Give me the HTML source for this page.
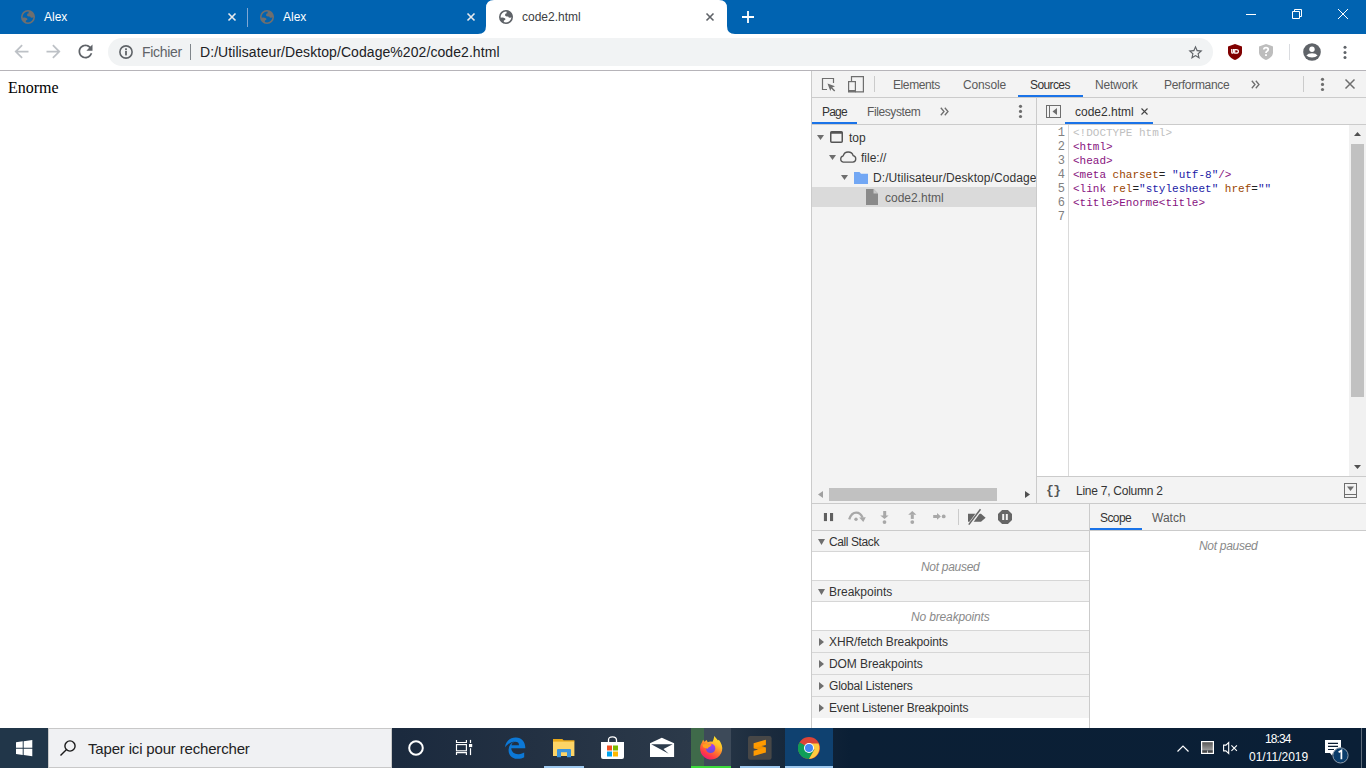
<!DOCTYPE html>
<html><head><meta charset="utf-8">
<style>
*{margin:0;padding:0;box-sizing:border-box}
html,body{width:1366px;height:768px;overflow:hidden;background:#fff;font-family:"Liberation Sans",sans-serif;position:relative}
.a{position:absolute}
.t{position:absolute;white-space:nowrap;line-height:16px;font-size:12px}
svg{position:absolute;overflow:visible}
</style></head><body>

<!-- TITLE BAR -->
<div class="a" style="left:0;top:0;width:1366px;height:34px;background:#0063b1"></div>
<!-- tab 1 -->
<svg style="left:21px;top:10px" width="14" height="14" viewBox="0 0 14 14"><circle cx="7" cy="7" r="6.2" stroke="#6f6f6f" stroke-width="1.6" fill="none"/><path d="M7.6 0.5V3.3Q6 3.6 6 5Q6 6.4 7.8 6.4H9.2Q9.6 8.2 11.3 7.8L13.5 6.8V0.5Z M0.5 7.8L3.6 7.4Q5.8 7.4 6.6 9Q6.2 10.3 4.9 10.5L4.6 13.5H0.5Z" fill="#6f6f6f" clip-path="circle(6.5px at 7px 7px)"/></svg>
<div class="t" style="left:44px;top:9px;color:#fff">Alex</div>
<svg style="left:228px;top:13px" width="8" height="8"><path d="M0.5 0.5L7.5 7.5M7.5 0.5L0.5 7.5" stroke="#e8eaed" stroke-width="1.6"/></svg>
<div class="a" style="left:247px;top:8px;width:1px;height:19px;background:#7fa7d4"></div>
<!-- tab 2 -->
<svg style="left:260px;top:10px" width="14" height="14" viewBox="0 0 14 14"><circle cx="7" cy="7" r="6.2" stroke="#6f6f6f" stroke-width="1.6" fill="none"/><path d="M7.6 0.5V3.3Q6 3.6 6 5Q6 6.4 7.8 6.4H9.2Q9.6 8.2 11.3 7.8L13.5 6.8V0.5Z M0.5 7.8L3.6 7.4Q5.8 7.4 6.6 9Q6.2 10.3 4.9 10.5L4.6 13.5H0.5Z" fill="#6f6f6f" clip-path="circle(6.5px at 7px 7px)"/></svg>
<div class="t" style="left:283px;top:9px;color:#fff">Alex</div>
<svg style="left:467px;top:13px" width="8" height="8"><path d="M0.5 0.5L7.5 7.5M7.5 0.5L0.5 7.5" stroke="#e8eaed" stroke-width="1.6"/></svg>
<!-- active tab -->
<svg style="left:478px;top:0px" width="257" height="34" viewBox="0 0 257 34"><path d="M0 34 Q8 34 8 26 L8 8 Q8 0 16 0 L241 0 Q249 0 249 8 L249 26 Q249 34 257 34 Z" fill="#fff"/></svg>
<svg style="left:499px;top:10px" width="14" height="14" viewBox="0 0 14 14"><circle cx="7" cy="7" r="6.2" stroke="#5f6368" stroke-width="1.6" fill="none"/><path d="M7.6 0.5V3.3Q6 3.6 6 5Q6 6.4 7.8 6.4H9.2Q9.6 8.2 11.3 7.8L13.5 6.8V0.5Z M0.5 7.8L3.6 7.4Q5.8 7.4 6.6 9Q6.2 10.3 4.9 10.5L4.6 13.5H0.5Z" fill="#5f6368" clip-path="circle(6.5px at 7px 7px)"/></svg>
<div class="t" style="left:522px;top:9px;color:#3c4043">code2.html</div>
<svg style="left:706px;top:13px" width="8" height="8"><path d="M0.5 0.5L7.5 7.5M7.5 0.5L0.5 7.5" stroke="#5f6368" stroke-width="1.6"/></svg>
<!-- new tab -->
<svg style="left:742px;top:11px" width="12" height="12"><path d="M6 0V12M0 6H12" stroke="#fff" stroke-width="1.8"/></svg>
<!-- window controls -->
<div class="a" style="left:1246px;top:14px;width:10px;height:1px;background:#fff"></div>
<svg style="left:1292px;top:9px" width="10" height="10"><path d="M0.5 2.5H7.5V9.5H0.5Z M2.5 2.5V0.5H9.5V7.5H7.5" stroke="#fff" stroke-width="1" fill="none"/></svg>
<svg style="left:1338px;top:9px" width="10" height="10"><path d="M0 0L10 10M10 0L0 10" stroke="#fff" stroke-width="1"/></svg>

<!-- TOOLBAR -->
<div class="a" style="left:0;top:70px;width:1366px;height:1px;background:#b6b4b9"></div>
<svg style="left:10.7px;top:40.8px" width="21" height="21" viewBox="0 0 24 24"><path d="M20 11H7.83l5.59-5.59L12 4l-8 8 8 8 1.41-1.41L7.83 13H20v-2z" fill="#bdc1c6"/></svg>
<svg style="left:42.7px;top:40.8px" width="21" height="21" viewBox="0 0 24 24"><path d="M12 4l-1.41 1.41L16.17 11H4v2h12.17l-5.58 5.59L12 20l8-8z" fill="#bdc1c6"/></svg>
<svg style="left:75px;top:40.8px" width="21" height="21" viewBox="0 0 24 24"><path d="M17.65 6.35C16.2 4.9 14.21 4 12 4c-4.42 0-7.99 3.58-7.99 8s3.57 8 7.99 8c3.73 0 6.84-2.55 7.73-6h-2.08c-.82 2.33-3.04 4-5.650 4-3.31 0-6-2.690-6-6s2.69-6 6-6c1.66 0 3.14.69 4.22 1.78L13 11h7V4l-2.35 2.35z" fill="#5f6368"/></svg>
<div class="a" style="left:108px;top:38px;width:1105px;height:28px;border-radius:14px;background:#f1f3f4"></div>
<svg style="left:119px;top:45px" width="14" height="14" viewBox="0 0 14 14"><circle cx="7" cy="7" r="6.1" stroke="#5f6368" stroke-width="1.6" fill="none"/><rect x="6.1" y="5.8" width="1.8" height="4.6" fill="#5f6368"/><rect x="6.1" y="3.3" width="1.8" height="1.7" fill="#5f6368"/></svg>
<div class="t" style="left:142px;top:43px;font-size:14px;line-height:18px;color:#5f6368;letter-spacing:-0.3px">Fichier</div>
<div class="a" style="left:190px;top:44px;width:1px;height:16px;background:#80868b"></div>
<div class="t" style="left:200px;top:43px;font-size:14px;line-height:18px;color:#202124;letter-spacing:0.07px">D:/Utilisateur/Desktop/Codage%202/code2.html</div>
<svg style="left:1186.5px;top:43.5px" width="17" height="17" viewBox="0 0 24 24"><path d="M22 9.24l-7.19-.62L12 2 9.19 8.63 2 9.24l5.46 4.73L5.82 21 12 17.27 18.18 21l-1.63-7.03L22 9.24zM12 15.4l-3.76 2.27 1-4.28-3.32-2.88 4.38-.38L12 6.1l1.71 4.04 4.38.38-3.32 2.88 1 4.28L12 15.4z" fill="#5f6368"/></svg>
<svg style="left:1228px;top:44px" width="14" height="16" viewBox="0 0 14 16"><path d="M7 0L14 2.4V8.5C14 12 10.5 14.6 7 16C3.5 14.6 0 12 0 8.5V2.4Z" fill="#800000"/><path d="M3.7 5.1V8.3Q3.7 9.2 4.55 9.2Q5.4 9.2 5.4 8.3V5.1M6.7 5.7V9.2H8Q10.4 9.2 10.4 7.45Q10.4 5.7 8 5.7Z" stroke="#fff" stroke-width="1.2" fill="none"/></svg>
<svg style="left:1259px;top:44px" width="14" height="16" viewBox="0 0 14 16"><path d="M7 0L14 2.4V8.5C14 12 10.5 14.6 7 16C3.5 14.6 0 12 0 8.5V2.4Z" fill="#bdbdbd"/><path d="M4.8 5.6Q4.8 3.6 7 3.6Q9.2 3.6 9.2 5.5Q9.2 6.6 8 7.2Q7 7.7 7 9" stroke="#fff" stroke-width="1.8" fill="none"/><rect x="6.1" y="10.2" width="1.8" height="1.8" fill="#fff"/></svg>
<div class="a" style="left:1289px;top:44px;width:1px;height:16px;background:#dadce0"></div>
<svg style="left:1303px;top:43px" width="18" height="18" viewBox="0 0 18 18"><circle cx="9" cy="9" r="8.8" fill="#5f6368"/><circle cx="9" cy="6.3" r="2.7" fill="#fff"/><path d="M3.4 12.6Q5 10.3 9 10.3Q13 10.3 14.6 12.6Q12.6 14.6 9 14.6Q5.4 14.6 3.4 12.6Z" fill="#fff"/></svg>
<svg style="left:1343px;top:45px" width="4" height="14" viewBox="0 0 4 14"><circle cx="2" cy="2.3" r="1.5" fill="#5f6368"/><circle cx="2" cy="7.4" r="1.5" fill="#5f6368"/><circle cx="2" cy="12.5" r="1.5" fill="#5f6368"/></svg>

<!-- PAGE -->
<div class="t" style="left:8px;top:78px;font-family:'Liberation Serif',serif;font-size:16px;line-height:20px;color:#000">Enorme</div>


<!-- DEVTOOLS -->
<div class="a" style="left:811px;top:71px;width:555px;height:657px;background:#f3f3f3"></div>
<div class="a" style="left:811px;top:71px;width:1px;height:657px;background:#cbcbcb"></div>
<div class="a" style="left:812px;top:97px;width:554px;height:1px;background:#cbcbcb"></div>
<!-- inspect icon -->
<svg style="left:822px;top:78px" width="14" height="14" viewBox="0 0 14 14"><path d="M5 11.5H0.5V0.5H11.5V5" stroke="#6e6e6e" stroke-width="1.2" fill="none"/><path d="M5.5 5.5L13 8.3L10.2 9.4L13.2 12.4L12.2 13.4L9.2 10.4L8.3 13Z" fill="#6e6e6e"/></svg>
<!-- device icon -->
<svg style="left:848px;top:76px" width="16" height="17" viewBox="0 0 16 17"><path d="M3.5 5.5V0.6H15.4V15.9H7.5" stroke="#6e6e6e" stroke-width="1.2" fill="none"/><rect x="0.6" y="5.6" width="6.8" height="10.3" stroke="#6e6e6e" stroke-width="1.2" fill="none"/><rect x="0.6" y="14" width="6.8" height="1.9" fill="#6e6e6e"/></svg>
<div class="a" style="left:874px;top:76px;width:1px;height:16px;background:#cbcbcb"></div>
<div class="t" style="left:893px;top:77px;color:#5a5a5a;letter-spacing:-0.4px">Elements</div>
<div class="t" style="left:963px;top:77px;color:#5a5a5a;letter-spacing:-0.15px">Console</div>
<div class="t" style="left:1030px;top:77px;color:#333;letter-spacing:-0.6px">Sources</div>
<div class="t" style="left:1095px;top:77px;color:#5a5a5a;letter-spacing:-0.2px">Network</div>
<div class="t" style="left:1164px;top:77px;color:#5a5a5a;letter-spacing:-0.3px">Performance</div>
<div class="a" style="left:1018px;top:95px;width:65px;height:2px;background:#1a73e8"></div>
<svg style="left:1251px;top:80px" width="9" height="9" viewBox="0 0 9 9"><path d="M0.8 0.8L4 4.5L0.8 8.2M4.8 0.8L8 4.5L4.8 8.2" stroke="#6e6e6e" stroke-width="1.3" fill="none"/></svg>
<div class="a" style="left:1303px;top:76px;width:1px;height:16px;background:#cbcbcb"></div>
<svg style="left:1320px;top:77px" width="5" height="15" viewBox="0 0 5 15"><circle cx="2.5" cy="2.3" r="1.6" fill="#6e6e6e"/><circle cx="2.5" cy="7.4" r="1.6" fill="#6e6e6e"/><circle cx="2.5" cy="12.5" r="1.6" fill="#6e6e6e"/></svg>
<svg style="left:1345px;top:79px" width="10" height="10" viewBox="0 0 10 10"><path d="M0.5 0.5L9.5 9.5M9.5 0.5L0.5 9.5" stroke="#6e6e6e" stroke-width="1.5"/></svg>

<!-- second row -->
<div class="a" style="left:812px;top:124px;width:554px;height:1px;background:#cbcbcb"></div>
<div class="a" style="left:1036px;top:98px;width:1px;height:405px;background:#cbcbcb"></div>
<div class="t" style="left:822px;top:104px;color:#333;letter-spacing:-0.8px">Page</div>
<div class="t" style="left:867px;top:104px;color:#5a5a5a;letter-spacing:-0.4px">Filesystem</div>
<div class="a" style="left:812px;top:122px;width:45px;height:2px;background:#1a73e8"></div>
<svg style="left:939.5px;top:106.5px" width="9" height="9" viewBox="0 0 9 9"><path d="M0.8 0.8L4 4.5L0.8 8.2M4.8 0.8L8 4.5L4.8 8.2" stroke="#6e6e6e" stroke-width="1.3" fill="none"/></svg>
<svg style="left:1018px;top:104px" width="5" height="15" viewBox="0 0 5 15"><circle cx="2.5" cy="2.3" r="1.6" fill="#6e6e6e"/><circle cx="2.5" cy="7.4" r="1.6" fill="#6e6e6e"/><circle cx="2.5" cy="12.5" r="1.6" fill="#6e6e6e"/></svg>
<svg style="left:1046px;top:105px" width="15" height="13" viewBox="0 0 15 13"><rect x="0.5" y="0.5" width="14" height="12" stroke="#6e6e6e" stroke-width="1" fill="none"/><path d="M3.5 0.5V12.5" stroke="#6e6e6e" stroke-width="1"/><path d="M11 3L6.5 6.5L11 10Z" fill="#6e6e6e"/></svg>
<div class="t" style="left:1075px;top:104px;color:#333">code2.html</div>
<svg style="left:1141px;top:107.5px" width="7" height="7" viewBox="0 0 7 7"><path d="M0.5 0.5L6.5 6.5M6.5 0.5L0.5 6.5" stroke="#444" stroke-width="1.1"/></svg>
<div class="a" style="left:1065px;top:122px;width:88px;height:2px;background:#1a73e8"></div>

<!-- navigator tree -->
<div class="a" style="left:812px;top:187px;width:224px;height:20px;background:#dadada"></div>
<svg style="left:817px;top:135px" width="7" height="5"><path d="M0 0H7L3.5 5Z" fill="#6e6e6e"/></svg>
<svg style="left:830px;top:131px" width="13" height="12" viewBox="0 0 13 12"><rect x="0.75" y="0.75" width="11.5" height="10.5" rx="1" stroke="#555" stroke-width="1.5" fill="none"/><rect x="0.75" y="0.75" width="11.5" height="2" fill="#555"/></svg>
<div class="t" style="left:849px;top:130px;color:#333">top</div>
<svg style="left:829px;top:155px" width="7" height="5"><path d="M0 0H7L3.5 5Z" fill="#6e6e6e"/></svg>
<svg style="left:839px;top:151px" width="18" height="12" viewBox="0 0 18 12"><path d="M4.2 11.2H13.8A3.3 3.3 0 0 0 14.2 4.7A5.2 5.2 0 0 0 4.2 4.8A3.3 3.3 0 0 0 4.2 11.2Z" stroke="#555" stroke-width="1.3" fill="none"/></svg>
<div class="t" style="left:861px;top:150px;color:#333">file://</div>
<svg style="left:841px;top:175px" width="7" height="5"><path d="M0 0H7L3.5 5Z" fill="#6e6e6e"/></svg>
<svg style="left:854px;top:172px" width="14" height="12" viewBox="0 0 14 12"><path d="M0 0H5.5L7 1.8H14V12H0Z" fill="#72a7f4"/></svg>
<div class="a" style="left:873px;top:165px;width:163px;height:22px;overflow:hidden"><div class="t" style="left:0;top:5px;color:#333;letter-spacing:0.07px">D:/Utilisateur/Desktop/Codage%202</div></div>
<svg style="left:866px;top:189px" width="12" height="16" viewBox="0 0 12 16"><path d="M0 0H7.5L12 4.5V16H0Z" fill="#8a8a8a"/><path d="M7.5 0V4.5H12" fill="#c8c8c8"/></svg>
<div class="t" style="left:885px;top:190px;color:#5a5a5a">code2.html</div>

<!-- editor -->
<div class="a" style="left:1037px;top:125px;width:329px;height:351px;background:#fff"></div>
<div class="a" style="left:1068px;top:125px;width:1px;height:351px;background:#dadada"></div>
<div class="a" style="left:1035px;top:126px;width:30px;font-family:'Liberation Mono',monospace;font-size:12px;line-height:14px;color:#808080;text-align:right;white-space:pre">1
2
3
4
5
6
7</div>
<div class="a" style="left:1073px;top:126px;font-family:'Liberation Mono',monospace;font-size:11px;line-height:14px;color:#222;white-space:pre"><span style="color:#c0c0c0">&lt;!DOCTYPE html&gt;</span>
<span style="color:#881280">&lt;html&gt;</span>
<span style="color:#881280">&lt;head&gt;</span>
<span style="color:#881280">&lt;meta </span><span style="color:#994500">charset</span><span style="color:#222">= </span><span style="color:#1a1aa6">"utf-8"</span><span style="color:#881280">/&gt;</span>
<span style="color:#881280">&lt;link </span><span style="color:#994500">rel</span><span style="color:#222">=</span><span style="color:#1a1aa6">"stylesheet"</span> <span style="color:#994500">href</span><span style="color:#222">=</span><span style="color:#1a1aa6">""</span>
<span style="color:#881280">&lt;title&gt;Enorme&lt;title&gt;</span>
</div>
<!-- editor scrollbar -->
<div class="a" style="left:1349px;top:125px;width:17px;height:351px;background:#f1f1f1"></div>
<svg style="left:1354px;top:132px" width="7" height="4"><path d="M0 4H7L3.5 0Z" fill="#505050"/></svg>
<div class="a" style="left:1351px;top:144px;width:13px;height:253px;background:#c1c1c1"></div>
<svg style="left:1354px;top:465px" width="7" height="4"><path d="M0 0H7L3.5 4Z" fill="#505050"/></svg>
<!-- status bar -->
<div class="a" style="left:1037px;top:476px;width:329px;height:1px;background:#cbcbcb"></div>
<div class="t" style="left:1046px;top:483px;font-family:'Liberation Mono',monospace;font-weight:bold;font-size:13px;color:#555;letter-spacing:-0.5px">{}</div>
<div class="t" style="left:1076px;top:483px;color:#333;letter-spacing:-0.25px">Line 7, Column 2</div>
<svg style="left:1344px;top:483px" width="13" height="15" viewBox="0 0 13 15"><rect x="0.5" y="0.5" width="12" height="14" stroke="#6e6e6e" stroke-width="1" fill="none"/><path d="M0.5 11.5H12.5" stroke="#6e6e6e" stroke-width="1"/><path d="M3 3.5H10L6.5 8Z" fill="#6e6e6e"/></svg>
<!-- navigator hscroll -->
<svg style="left:818px;top:491px" width="5" height="7"><path d="M5 0V7L0 3.5Z" fill="#a0a0a0"/></svg>
<div class="a" style="left:829px;top:488px;width:168px;height:13px;background:#c1c1c1"></div>
<svg style="left:1025px;top:491px" width="5" height="7"><path d="M0 0V7L5 3.5Z" fill="#505050"/></svg>
<div class="a" style="left:812px;top:503px;width:554px;height:1px;background:#cbcbcb"></div>

<!-- debugger toolbar -->
<div class="a" style="left:812px;top:530px;width:277px;height:1px;background:#cbcbcb"></div>
<div class="a" style="left:1089px;top:504px;width:1px;height:224px;background:#cbcbcb"></div>
<svg style="left:818px;top:504px" width="130" height="26" viewBox="0 0 130 26"><rect x="5.9" y="9" width="3.1" height="8.1" fill="#606060"/><rect x="12" y="9" width="3.1" height="8.1" fill="#606060"/><path d="M31.2 15.3Q33.5 8.6 38.2 8.6Q42.6 8.6 44.6 13.6" stroke="#a8a8a8" stroke-width="2.3" fill="none"/><path d="M41.2 13.5L47.8 13.2L45.3 17.9Z" fill="#a8a8a8"/><circle cx="38" cy="15.2" r="1.7" fill="#a8a8a8"/><rect x="65.2" y="7" width="3" height="5" fill="#a8a8a8"/><path d="M62.3 11.4H70.6L66.5 15Z" fill="#a8a8a8"/><circle cx="66.5" cy="18.1" r="1.9" fill="#a8a8a8"/><path d="M94.3 7.1L98.4 10.7H90.2Z" fill="#a8a8a8"/><rect x="92.8" y="10.5" width="3" height="4.4" fill="#a8a8a8"/><circle cx="94.3" cy="18.1" r="1.9" fill="#a8a8a8"/><rect x="115.2" y="11" width="4.5" height="3" fill="#a8a8a8"/><path d="M119 9L122.9 12.4L119 15.8Z" fill="#a8a8a8"/><circle cx="125.7" cy="12.4" r="1.9" fill="#a8a8a8"/></svg>
<div class="a" style="left:958px;top:509px;width:1px;height:16px;background:#cbcbcb"></div>
<svg style="left:967px;top:509px" width="20" height="16" viewBox="0 0 20 16"><path d="M1 4.8H14L18.6 8.8L14 12.8H1Z" fill="#666"/><path d="M2.3 16L13.9 0" stroke="#f3f3f3" stroke-width="3.4"/><path d="M1.8 15.6L13.5 0.2" stroke="#666" stroke-width="1.5"/></svg>
<svg style="left:998px;top:510px" width="14" height="14" viewBox="0 0 14 14"><path d="M4.1 0H9.9L14 4.1V9.9L9.9 14H4.1L0 9.9V4.1Z" fill="#666"/><rect x="4.2" y="4" width="2" height="6" fill="#f3f3f3"/><rect x="7.8" y="4" width="2" height="6" fill="#f3f3f3"/></svg>

<!-- scope/watch -->
<div class="a" style="left:1090px;top:530px;width:276px;height:1px;background:#cbcbcb"></div>
<div class="t" style="left:1100px;top:510px;color:#333;letter-spacing:-0.6px">Scope</div>
<div class="t" style="left:1152px;top:510px;color:#5a5a5a">Watch</div>
<div class="a" style="left:1090px;top:528px;width:52px;height:2px;background:#1a73e8"></div>
<div class="a" style="left:1090px;top:531px;width:276px;height:197px;background:#fff"></div>
<div class="t" style="left:1199px;top:538px;color:#8a8a8a;font-style:italic;letter-spacing:-0.3px">Not paused</div>

<!-- sections -->
<div class="a" style="left:812px;top:551px;width:277px;height:1px;background:#d6d6d6"></div>
<div class="a" style="left:812px;top:552px;width:277px;height:28px;background:#fff"></div>
<div class="a" style="left:812px;top:580px;width:277px;height:1px;background:#d6d6d6"></div>
<div class="a" style="left:812px;top:601px;width:277px;height:1px;background:#d6d6d6"></div>
<div class="a" style="left:812px;top:602px;width:277px;height:28px;background:#fff"></div>
<div class="a" style="left:812px;top:630px;width:277px;height:1px;background:#d6d6d6"></div>
<div class="a" style="left:812px;top:652px;width:277px;height:1px;background:#d6d6d6"></div>
<div class="a" style="left:812px;top:674px;width:277px;height:1px;background:#d6d6d6"></div>
<div class="a" style="left:812px;top:696px;width:277px;height:1px;background:#d6d6d6"></div>
<div class="a" style="left:812px;top:718px;width:277px;height:10px;background:#fff"></div>
<svg style="left:818px;top:539px" width="7" height="6"><path d="M0 0H7L3.5 6Z" fill="#6e6e6e"/></svg>
<div class="t" style="left:829px;top:534px;color:#333;letter-spacing:-0.4px">Call Stack</div>
<div class="t" style="left:921px;top:559px;color:#8a8a8a;font-style:italic;letter-spacing:-0.3px">Not paused</div>
<svg style="left:818px;top:589px" width="7" height="6"><path d="M0 0H7L3.5 6Z" fill="#6e6e6e"/></svg>
<div class="t" style="left:829px;top:584px;color:#333">Breakpoints</div>
<div class="t" style="left:911px;top:609px;color:#8a8a8a;font-style:italic;letter-spacing:-0.15px">No breakpoints</div>
<svg style="left:819px;top:638px" width="5" height="8"><path d="M0 0V8L5 4Z" fill="#6e6e6e"/></svg>
<div class="t" style="left:829px;top:634px;color:#333;letter-spacing:-0.12px">XHR/fetch Breakpoints</div>
<svg style="left:819px;top:660px" width="5" height="8"><path d="M0 0V8L5 4Z" fill="#6e6e6e"/></svg>
<div class="t" style="left:829px;top:656px;color:#333;letter-spacing:-0.07px">DOM Breakpoints</div>
<svg style="left:819px;top:682px" width="5" height="8"><path d="M0 0V8L5 4Z" fill="#6e6e6e"/></svg>
<div class="t" style="left:829px;top:678px;color:#333;letter-spacing:-0.2px">Global Listeners</div>
<svg style="left:819px;top:704px" width="5" height="8"><path d="M0 0V8L5 4Z" fill="#6e6e6e"/></svg>
<div class="t" style="left:829px;top:700px;color:#333;letter-spacing:-0.16px">Event Listener Breakpoints</div>

<!-- TASKBAR -->
<div class="a" style="left:0;top:728px;width:1366px;height:40px;background:linear-gradient(90deg,#213649 0px,#213649 48px,#1b2a3e 400px,#223042 520px,#2c3a4a 700px,#1c2c3e 760px,#0b1f35 850px,#0a1f36 1366px)"></div>
<svg style="left:15.8px;top:739.8px" width="16.3" height="16.3" viewBox="0 0 17 17"><path d="M0 2.4L7 1.4V8H0Z M8 1.3L17 0V8H8Z M0 9H7V15.6L0 14.6Z M8 9H17V17L8 15.7Z" fill="#fff"/></svg>
<div class="a" style="left:48px;top:728px;width:344px;height:40px;background:#f0f1f3;border:1px solid #c8c8c8"></div>
<svg style="left:60px;top:740px" width="16" height="16" viewBox="0 0 16 16"><circle cx="10" cy="6" r="5.1" stroke="#1a1a1a" stroke-width="1.4" fill="none"/><path d="M6.3 9.7L0.5 15.5" stroke="#1a1a1a" stroke-width="1.4"/></svg>
<div class="t" style="left:88px;top:739px;font-size:15px;line-height:20px;color:#222;letter-spacing:-0.17px">Taper ici pour rechercher</div>
<svg style="left:408px;top:740px" width="16" height="16" viewBox="0 0 16 16"><circle cx="8" cy="8" r="6.8" stroke="#fff" stroke-width="2" fill="none"/></svg>
<svg style="left:450px;top:735px" width="28" height="26" viewBox="0 0 28 26"><path d="M6.5 4.9V7.5H16.4V4.9M6.5 20.1V17.6H16.4V20.1" stroke="#fff" stroke-width="1.15" fill="none"/><rect x="6.5" y="9.6" width="9.9" height="6.2" stroke="#fff" stroke-width="1.15" fill="none"/><rect x="19.9" y="4.9" width="1.2" height="3.1" fill="#fff"/><rect x="19" y="9" width="3.2" height="3.1" fill="#fff"/><rect x="19.9" y="13.2" width="1.2" height="6.9" fill="#fff"/></svg>
<!-- edge -->
<svg style="left:504px;top:737px" width="22" height="22" viewBox="0 0 22 22"><path d="M1 10.5C1.5 4 6.5 0.3 12 0.5C17.8 0.7 21.5 5 21.3 11.3H7.3C7.5 15.5 11 17.5 14.8 17.2C17 17 19 16.3 20.2 15.5V20.3C18 21.5 15.5 22 13 21.8C7.5 21.5 4.3 17.5 4.6 12.5C4.8 9 7 5.6 11 4.6C7.5 4.8 3.5 7 1 10.5Z M7.5 8.2H15C15 5.8 13.6 4.8 11.5 4.8C9.5 4.8 7.9 6.1 7.5 8.2Z" fill="#0c78d6" fill-rule="evenodd"/></svg>
<!-- explorer -->
<svg style="left:553px;top:739px" width="22" height="19" viewBox="0 0 22 19"><path d="M0 0H9.3L10.6 1.2H21.4V3H0Z" fill="#e9a81a"/><path d="M0 2.6H21.4V17H0Z" fill="#fdd466"/><path d="M4 18.2V11Q4 10 5 10H17Q18 10 18 11V18.2H14V13.3H8V18.2Z" fill="#3b94dc"/></svg>
<div class="a" style="left:544px;top:766px;width:40px;height:2px;background:#9dc8ef"></div>
<!-- store -->
<svg style="left:601px;top:736px" width="23" height="23" viewBox="0 0 23 23"><path d="M7.5 6V4Q7.5 0.8 11.5 0.8Q15.5 0.8 15.5 4V6" stroke="#fff" stroke-width="1.3" fill="none"/><path d="M0 6H23V21Q23 23 21 23H2Q0 23 0 21Z" fill="#fff"/><rect x="6" y="9.5" width="5" height="5" fill="#f25022"/><rect x="12" y="9.5" width="5" height="5" fill="#7fba00"/><rect x="6" y="15.5" width="5" height="5" fill="#00a4ef"/><rect x="12" y="15.5" width="5" height="5" fill="#ffb900"/></svg>
<!-- mail -->
<svg style="left:650px;top:737px" width="24" height="20" viewBox="0 0 24 20"><path d="M0 6.3L11.8 0.8L24.1 6.3V20H0Z" fill="#fff"/><path d="M1.2 7.3H22.7L13.5 12.1L18.7 16.7Z" fill="#2c3b4c"/></svg>
<!-- firefox btn -->
<div class="a" style="left:691px;top:728px;width:40px;height:40px;background:#3d4a59"></div>
<div class="a" style="left:691px;top:728px;width:13px;height:38px;background:#3f6a4a"></div>
<div class="a" style="left:691px;top:766px;width:40px;height:2px;background:#3cdb3c"></div>
<svg style="left:699px;top:736px" width="24" height="24" viewBox="0 0 24 24"><defs><linearGradient id="ff1" x1="0.85" y1="0.05" x2="0.3" y2="1"><stop offset="0" stop-color="#ffe626"/><stop offset="0.3" stop-color="#ffc02a"/><stop offset="0.55" stop-color="#ff7a2e"/><stop offset="0.8" stop-color="#ff3b45"/><stop offset="1" stop-color="#ec1a78"/></linearGradient><linearGradient id="ff2" x1="0.5" y1="0" x2="0.4" y2="1"><stop offset="0" stop-color="#a73bf5"/><stop offset="1" stop-color="#6350d6"/></linearGradient></defs><path d="M3.0 6.2L4.1 3.8L5.5 5.8L7.5 4.0L8.8 6.2Q11 5.3 13.5 5.8L14.5 3.5Q15.2 1.2 15.2 0Q17.5 2.5 19 4.5L19.8 3.8Q22 6.5 22.7 9A11.1 11.1 0 1 1 3.0 6.2Z" fill="url(#ff1)"/><circle cx="11.6" cy="12.4" r="4.7" fill="url(#ff2)"/><path d="M3.5 8.6Q6.5 7.8 9 8.3Q11 8.6 12.3 7.6Q13 9.5 11.2 10.5Q9.5 11 8.5 12.8Q6 12 4.2 11.2Z" fill="#ffa01c"/></svg>
<!-- sublime -->
<div class="a" style="left:740px;top:766px;width:40px;height:2px;background:#9dc8ef"></div>
<svg style="left:748px;top:736px" width="24" height="24" viewBox="0 0 24 24"><rect x="0" y="0" width="23.6" height="23.8" rx="2.2" fill="#474747"/><path d="M5.6 7.3L17.9 3.7V9.0L13.3 10.1L17.9 11.5V16.4L5.6 20V14.8L10.3 13.6L5.6 12.3Z" fill="#ff9a00"/><path d="M5.6 12.3L10.3 13.6L17.9 11.5L13.3 10.1Z" fill="#e88c00" opacity="0.6"/></svg>
<!-- chrome -->
<div class="a" style="left:785px;top:728px;width:48px;height:40px;background:#0f4170"></div>
<div class="a" style="left:785px;top:766px;width:48px;height:2px;background:#9dc8ef"></div>
<svg style="left:798px;top:737px" width="22" height="22" viewBox="0 0 22 22"><circle cx="11" cy="11" r="11" fill="#db4437"/><path d="M11 11L1.5 5.5A11 11 0 0 0 11 22L16.5 12.5Z" fill="#0f9d58"/><path d="M11 6.6H20.5A11 11 0 0 1 11 22L16.5 12.5Z" fill="#ffcd40"/><path d="M11 11L1.47 5.5A11 11 0 0 0 5.5 20.5L11 11Z" fill="#0f9d58"/><circle cx="11" cy="11" r="5" fill="#fff"/><circle cx="11" cy="11" r="4" fill="#4285f4"/></svg>
<!-- tray -->
<svg style="left:1177px;top:745px" width="12" height="7" viewBox="0 0 12 7"><path d="M0.5 6.5L6 1L11.5 6.5" stroke="#fff" stroke-width="1.2" fill="none"/></svg>
<svg style="left:1201px;top:741px" width="13" height="13" viewBox="0 0 13 13"><defs><linearGradient id="tp" x1="0" y1="0" x2="0" y2="1"><stop offset="0" stop-color="#575757"/><stop offset="1" stop-color="#a0a0a0"/></linearGradient></defs><rect x="1" y="1" width="11" height="8.6" fill="url(#tp)"/><rect x="1" y="9.6" width="11" height="2.4" fill="#454545"/><rect x="6.1" y="9.6" width="0.8" height="2.4" fill="#ddd"/><rect x="0.6" y="0.6" width="11.8" height="11.8" stroke="#fff" stroke-width="1.2" fill="none"/></svg>
<svg style="left:1223px;top:742px" width="15" height="12" viewBox="0 0 15 12"><path d="M0.6 3.1H2.9L5.7 0.5V11.5L2.9 8.9H0.6Z" stroke="#fff" stroke-width="1.1" fill="none"/><path d="M8.4 3.3L13.9 8.8M13.9 3.3L8.4 8.8" stroke="#fff" stroke-width="1.1"/></svg>
<div class="t" style="left:1265px;top:731px;color:#fff;font-size:12px;line-height:16px;letter-spacing:-0.9px">18:34</div>
<div class="t" style="left:1249px;top:749px;color:#fff;font-size:12px;line-height:16px">01/11/2019</div>
<svg style="left:1318px;top:732px" width="48" height="36" viewBox="0 0 48 36"><path d="M7 8H23V21.1H15L14 23.5L12 21.1H7Z" fill="#fff"/><path d="M10 11.4H20M10 14.4H20M10 17.5H16" stroke="#0a1c32" stroke-width="1.1"/><circle cx="22.5" cy="23.4" r="7.6" fill="#0b3d6b" stroke="#8e9cab" stroke-width="1"/><path d="M20.6 20.3L23.4 18.6V27.2" stroke="#fff" stroke-width="1.7" fill="none"/></svg>
<div class="a" style="left:1361px;top:728px;width:1px;height:40px;background:#5d6b7a"></div>
</body></html>
